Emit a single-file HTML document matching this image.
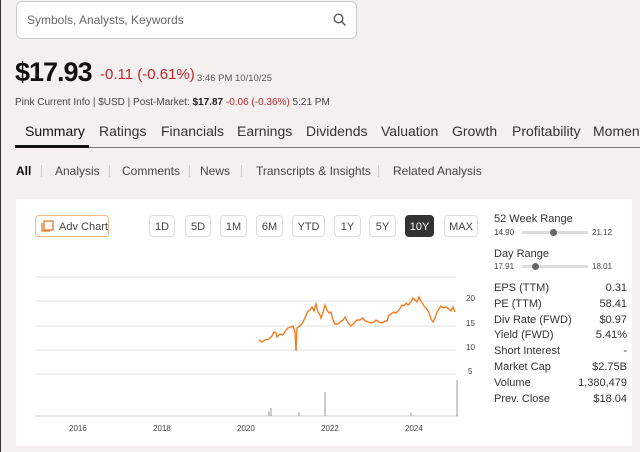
<!DOCTYPE html>
<html><head><style>
body{margin:0;width:640px;height:452px;background:#f3f0ef;font-family:"Liberation Sans",sans-serif;position:relative;overflow:hidden;border-left:1px solid #333;box-sizing:border-box}
.a{position:absolute;white-space:nowrap}
.search{left:15px;top:1px;width:341px;height:38px;background:#fff;border:1px solid #ccc;border-radius:6px;box-sizing:border-box}
.tab{top:123px;font-size:14px;color:#333}
.sub{top:164px;font-size:12px;color:#444}
.sep{top:165px;width:1px;height:12px;background:#ccc}
.card{left:15px;top:199px;width:616px;height:247px;background:#fff}
.btn{top:215px;height:22px;border:1px solid #ddd;border-radius:4px;font-size:11px;color:#444;text-align:center;line-height:22px;box-sizing:border-box;background:#fff}
.st{font-size:11px;color:#333}
</style></head><body>
<div class="a search"><span class="a" style="left:10px;top:11px;font-size:12px;color:#666">Symbols, Analysts, Keywords</span>
<svg class="a" style="left:316px;top:11px" width="14" height="14"><circle cx="5.5" cy="5.5" r="4.3" fill="none" stroke="#555" stroke-width="1.4"/><line x1="8.6" y1="8.6" x2="12.5" y2="12.5" stroke="#555" stroke-width="1.4"/></svg></div>
<div class="a" style="left:14px;top:57px;font-size:27px;font-weight:bold;color:#111;letter-spacing:-1px">$17.93</div>
<div class="a" style="left:99px;top:66px;font-size:15px;color:#c4262e">-0.11 (-0.61%)</div>
<div class="a" style="left:196px;top:73px;font-size:9.5px;color:#555">3:46 PM 10/10/25</div>
<div class="a" style="left:14px;top:97px;font-size:10px;color:#444">Pink Current Info | $USD | Post-Market: <b style="color:#222">$17.87</b> <span style="color:#c4262e">-0.06 (-0.36%)</span> 5:21 PM</div>
<div class="a tab" style="left:24px;color:#111">Summary</div>
<div class="a tab" style="left:98px">Ratings</div>
<div class="a tab" style="left:160px">Financials</div>
<div class="a tab" style="left:236px">Earnings</div>
<div class="a tab" style="left:305px">Dividends</div>
<div class="a tab" style="left:380px">Valuation</div>
<div class="a tab" style="left:451px">Growth</div>
<div class="a tab" style="left:511px">Profitability</div>
<div class="a tab" style="left:592px">Momentum</div>
<div class="a" style="left:14px;top:147px;width:626px;height:1px;background:#777"></div>
<div class="a" style="left:14px;top:145px;width:74px;height:3px;background:#111"></div>
<div class="a sub" style="left:15px;color:#111;font-weight:bold">All</div>
<div class="a sep" style="left:40px"></div>
<div class="a sub" style="left:54px">Analysis</div>
<div class="a sep" style="left:108px"></div>
<div class="a sub" style="left:121px">Comments</div>
<div class="a sep" style="left:188px"></div>
<div class="a sub" style="left:199px">News</div>
<div class="a sep" style="left:240px"></div>
<div class="a sub" style="left:255px">Transcripts &amp; Insights</div>
<div class="a sep" style="left:377px"></div>
<div class="a sub" style="left:392px">Related Analysis</div>
<div class="a card"></div>
<div class="a btn" style="left:34px;width:74px;border-color:#f5b985;text-align:left;padding-left:23px">Adv Chart</div>
<svg class="a" style="left:40px;top:220px" width="13" height="12"><rect x="3" y="1" width="9" height="9" fill="none" stroke="#e8782c" stroke-width="1.3"/><path d="M1 3V11H9" fill="none" stroke="#e8782c" stroke-width="1.3"/></svg>
<div class="a btn" style="left:148px;width:26px">1D</div>
<div class="a btn" style="left:184px;width:26px">5D</div>
<div class="a btn" style="left:219px;width:27px">1M</div>
<div class="a btn" style="left:255px;width:27px">6M</div>
<div class="a btn" style="left:291px;width:33px">YTD</div>
<div class="a btn" style="left:333px;width:27px">1Y</div>
<div class="a btn" style="left:368px;width:27px">5Y</div>
<div class="a btn" style="left:404px;width:29px;background:#333;color:#fff;border-color:#333">10Y</div>
<div class="a btn" style="left:443px;width:34px">MAX</div>
<div class="a st" style="left:493px;top:213px">52 Week Range</div>
<div class="a" style="left:493px;top:228px;font-size:8px;color:#444">14.90</div>
<div class="a" style="left:591px;top:228px;font-size:8px;color:#444">21.12</div>
<div class="a" style="left:521px;top:231px;width:66px;height:3px;background:#ddd"></div>
<div class="a" style="left:549px;top:229px;width:7px;height:7px;border-radius:50%;background:#666"></div>
<div class="a st" style="left:493px;top:248px">Day Range</div>
<div class="a" style="left:493px;top:262px;font-size:8px;color:#444">17.91</div>
<div class="a" style="left:591px;top:262px;font-size:8px;color:#444">18.01</div>
<div class="a" style="left:521px;top:265px;width:66px;height:3px;background:#ddd"></div>
<div class="a" style="left:531px;top:263px;width:7px;height:7px;border-radius:50%;background:#666"></div>
<div class="a" style="left:493px;top:281px;width:133px;font-size:11px;color:#333;line-height:15.8px">
<div style="display:flex;justify-content:space-between"><span>EPS (TTM)</span><span>0.31</span></div>
<div style="display:flex;justify-content:space-between"><span>PE (TTM)</span><span>58.41</span></div>
<div style="display:flex;justify-content:space-between"><span>Div Rate (FWD)</span><span>$0.97</span></div>
<div style="display:flex;justify-content:space-between"><span>Yield (FWD)</span><span>5.41%</span></div>
<div style="display:flex;justify-content:space-between"><span>Short Interest</span><span>-</span></div>
<div style="display:flex;justify-content:space-between"><span>Market Cap</span><span>$2.75B</span></div>
<div style="display:flex;justify-content:space-between"><span>Volume</span><span>1,380,479</span></div>
<div style="display:flex;justify-content:space-between"><span>Prev. Close</span><span>$18.04</span></div>
</div>
<svg class="a" style="left:0;top:0" width="640" height="452">
<g stroke="#e6e6e6" stroke-width="1.2"><line x1="34" y1="277" x2="455" y2="277"/><line x1="34" y1="301" x2="455" y2="301"/><line x1="34" y1="326" x2="455" y2="326"/><line x1="34" y1="350" x2="455" y2="350"/><line x1="34" y1="374" x2="455" y2="374"/></g>
<line x1="34" y1="416" x2="457" y2="416" stroke="#ccc"/>
<g fill="#444" font-size="8" font-family="Liberation Sans"><text x="465" y="301">20</text><text x="465" y="326">15</text><text x="465" y="350">10</text><text x="467" y="374">5</text>
<text x="68" y="431">2016</text><text x="152" y="431">2018</text><text x="236" y="431">2020</text><text x="320" y="431">2022</text><text x="404" y="431">2024</text></g>
<g stroke="#999" stroke-width="1"><line x1="324" y1="392" x2="324" y2="416"/><line x1="456" y1="380" x2="456" y2="416"/><line x1="270" y1="408" x2="270" y2="416"/><line x1="268" y1="411" x2="268" y2="416"/><line x1="298" y1="412" x2="298" y2="416"/><line x1="410" y1="413" x2="410" y2="416"/></g>
<polyline fill="none" stroke="#f47c20" stroke-width="1.4" points="258,340 261,342 264,340 268,339 271,336 273,332 275,333 276,337 279,334 282,335 285,330 287,328 290,327 292,326 294,332 295,351 296,328 299,326 302,322 304,318 307,311 309,310 311,307 313,311 315,304 317,312 319,315 320,318 322,312 324,305 326,310 328,313 330,312 332,320 334,324 337,324 339,322 342,320 344,317 347,323 350,326 353,323 356,320 359,320 362,318 364,321 367,322 370,323 373,322 375,320 378,322 381,323 384,321 386,321 388,315 390,314 393,312 395,313 398,310 401,305 403,306 405,303 407,305 410,302 412,298 414,300 416,302 418,297 420,301 423,306 426,309 428,313 430,319 432,322 434,318 436,312 438,309 440,306 442,308 445,307 448,309 450,311 452,307 454,312"/>
</svg>
</body></html>
